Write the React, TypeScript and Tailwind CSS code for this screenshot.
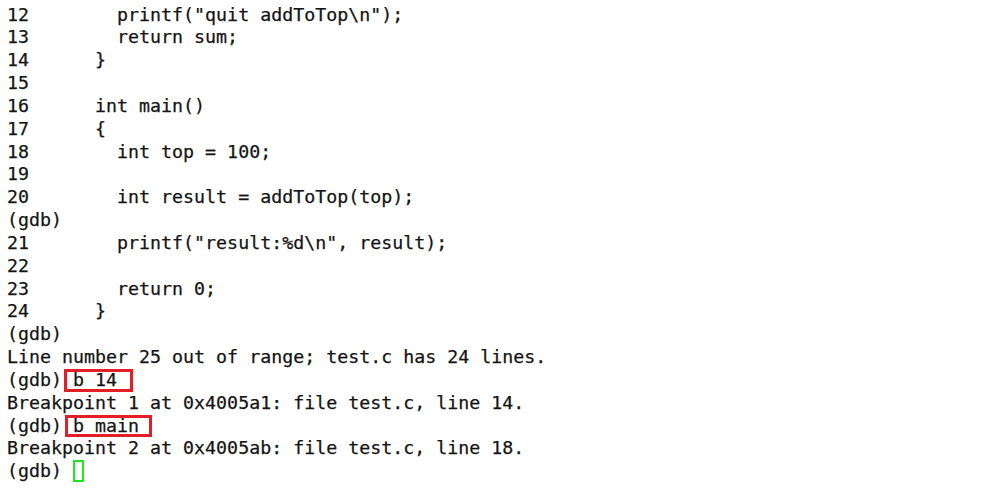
const lines: { text: string; box?: number[]; cursor?: boolean }[] = [
  { text: "12\t  printf(\"quit addToTop\\n\");" },
  { text: "13\t  return sum;" },
  { text: "14\t}" },
  { text: "15\t" },
  { text: "16\tint main()" },
  { text: "17\t{" },
  { text: "18\t  int top = 100;" },
  { text: "19\t" },
  { text: "20\t  int result = addToTop(top);" },
  { text: "(gdb)" },
  { text: "21\t  printf(\"result:%d\\n\", result);" },
  { text: "22\t" },
  { text: "23\t  return 0;" },
  { text: "24\t}" },
  { text: "(gdb)" },
  { text: "Line number 25 out of range; test.c has 24 lines." },
  { text: "(gdb) b 14", box: [64, 69] },
  { text: "Breakpoint 1 at 0x4005a1: file test.c, line 14." },
  { text: "(gdb) b main", box: [65, 87] },
  { text: "Breakpoint 2 at 0x4005ab: file test.c, line 18." },
  { text: "(gdb) ", cursor: true },
];

// expand tabs the way a terminal does (tab stops every 8 columns)
const expand = (s: string) => {
  let out = "";
  for (const ch of s) {
    if (ch === "\t") {
      out += " ".repeat(8 - (out.length % 8));
    } else {
      out += ch;
    }
  }
  return out;
};

export default function App() {
  return (
    <div className="w-[999px] h-[488px] overflow-hidden bg-white">
      <div
        className="pt-[3.6px] pl-[7px] text-[18.3px] leading-[22.83px] text-[#141414] whitespace-pre [-webkit-text-stroke:0.25px_#141414]"
        style={{ fontFamily: '"DejaVu Sans Mono", monospace' }}
      >
        {lines.map((line, i) => (
          <div key={i} className="relative h-[22.83px]">
            {expand(line.text)}
            {line.box && (
              <span
                className="absolute top-0 bottom-0 border-[3px] border-[#e41e26]"
                style={{ left: line.box[0] - 7, width: line.box[1] }}
              ></span>
            )}
            {line.cursor && (
              <span className="inline-block w-[11px] h-[22px] border-2 border-[#1ee61e] align-[-5px]"></span>
            )}
          </div>
        ))}
      </div>
    </div>
  );
}
